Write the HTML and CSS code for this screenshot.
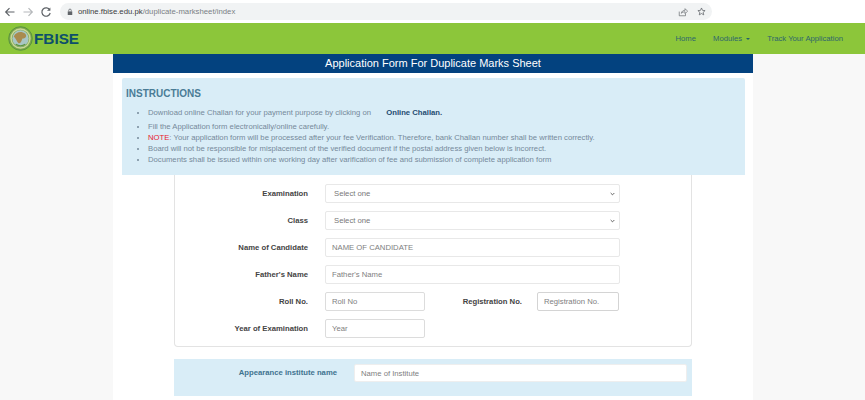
FILE: index.html
```html
<!DOCTYPE html>
<html lang="en">
<head>
    <meta charset="UTF-8">
    <title>Application Form For Duplicate Marks Sheet</title>
    <link rel="stylesheet" href="styles.css">
</head>
<body>

<div class="browser-bar">
    <svg class="nav-icon" viewBox="0 0 12 12"><path d="M10.500 6H2M5.500 2.200 1.700 6l3.800 3.800" fill="none" stroke="#5f6368" stroke-width="1.200"/></svg>
    <svg class="nav-icon" viewBox="0 0 12 12"><path d="M1.500 6H10M6.500 2.200 10.300 6 6.500 9.800" fill="none" stroke="#b5b8bb" stroke-width="1.200"/></svg>
    <svg class="nav-icon" viewBox="0 0 12 12"><path d="M9.800 4A4.200 4.200 0 1 0 10.200 7" fill="none" stroke="#5f6368" stroke-width="1.200"/><path d="M10.400 1.400v3.400H7z" fill="#5f6368"/></svg>
    <div class="address-bar">
        <svg class="lock" viewBox="0 0 8 10"><path d="M1 4.200h6V9H1z" fill="#5f6368"/><path d="M2.300 4.200V2.800a1.700 1.700 0 0 1 3.400 0v1.400" fill="none" stroke="#5f6368"/></svg>
        <span class="url"><span class="domain">online.fbise.edu.pk</span>/duplicate-marksheet/index</span>
        <svg class="share" viewBox="0 0 12 12"><path d="M1.500 5.500v5h7.500V8M4 7.500c.4-2.400 2.200-3.600 4.500-3.600V2l3 3-3 3V5.800C6.600 5.800 5.100 6.300 4 7.500z" fill="none" stroke="#5f6368" stroke-width=".8"/></svg>
        <svg class="star" viewBox="0 0 12 12"><path d="M6 1.300 7.400 4.500l3.400.3-2.600 2.300.8 3.400L6 8.700 3 10.500l.8-3.400L1.200 4.800l3.400-.3z" fill="none" stroke="#5f6368"/></svg>
    </div>
</div>

<nav class="navbar">
    <div class="brand">
        <svg class="logo" viewBox="0 0 26 26">
            <circle cx="13" cy="13" r="12.300" fill="#7da84a" stroke="#4f8a3e" stroke-width=".8"/>
            <circle cx="13" cy="13" r="9.800" fill="none" stroke="#c9d79a" stroke-width="1.500"/>
            <circle cx="13" cy="13" r="8.500" fill="#a8c6c4"/>
            <path d="M6 11c2-5 8-6 12-3 2 3 0 5-3 5-1 2-1 5-4 5-2-2-3-5-5-7z" fill="#a98b4e"/>
            <path d="M8 19c3 2 7 2 10 0" fill="none" stroke="#5e9440" stroke-width="1.500"/>
        </svg>
        <span class="brand-name">FBISE</span>
    </div>
    <ul class="nav-links">
        <li>Home</li>
        <li>Modules <span class="caret"></span></li>
        <li>Track Your Application</li>
    </ul>
</nav>

<div class="page">
    <h1 class="page-title">Application Form For Duplicate Marks Sheet</h1>

    <div class="instructions">
        <h4>INSTRUCTIONS</h4>
        <ul class="first-line">
            <li>Download online Challan for your payment purpose by clicking on <a class="challan-link">Online Challan.</a></li>
        </ul>
        <ul>
            <li>Fill the Application form electronically/online carefully.</li>
            <li><span class="note">NOTE</span>: Your application form will be processed after your fee Verification. Therefore, bank Challan number shall be written correctly.</li>
            <li>Board will not be responsible for misplacement of the verified document if the postal address given below is incorrect.</li>
            <li>Documents shall be issued within one working day after varification of fee and submission of complete application form</li>
        </ul>
    </div>

    <form class="form-panel">
        <div class="form-row">
            <label for="examination">Examination</label>
            <select id="examination" class="field wide pick"><option>Select one</option></select>
        </div>
        <div class="form-row">
            <label for="studentClass">Class</label>
            <select id="studentClass" class="field wide pick"><option>Select one</option></select>
        </div>
        <div class="form-row">
            <label for="candidate">Name of Candidate</label>
            <input id="candidate" class="field wide" type="text" placeholder="NAME OF CANDIDATE">
        </div>
        <div class="form-row">
            <label for="father">Father's Name</label>
            <input id="father" class="field wide" type="text" placeholder="Father's Name">
        </div>
        <div class="form-row">
            <label for="rollNo">Roll No.</label>
            <input id="rollNo" class="field short" type="text" placeholder="Roll No">
            <label for="regNo" class="reg-label">Registration No.</label>
            <input id="regNo" class="field reg" type="text" placeholder="Registration No.">
        </div>
        <div class="form-row">
            <label for="year">Year of Examination</label>
            <input id="year" class="field short" type="text" placeholder="Year">
        </div>
    </form>

    <div class="institute-panel">
        <label for="institute">Appearance institute name</label>
        <input id="institute" class="field institute" type="text" placeholder="Name of Institute">
    </div>
</div>

</body>
</html>
```

FILE: styles.css
```css
body {
    margin: 0;
    height: 400px;
    overflow: hidden;
    background-color: #f8f8f8;
    font-family: "Liberation Sans", Arial, sans-serif;
    font-size: 7.7px;
    color: #555;
}

/* Browser chrome */
.browser-bar {
    display: flex;
    align-items: center;
    height: 23px;
    padding-left: 4px;
    background-color: #fff;
}

.nav-icon {
    width: 12px;
    height: 12px;
    margin-right: 6px;
    flex-shrink: 0;
}

.address-bar {
    display: flex;
    align-items: center;
    width: 645px;
    height: 17px;
    margin-left: 2px;
    padding-left: 7px;
    background-color: #f1f3f4;
    border-radius: 9px;
}

.lock {
    width: 6px;
    height: 8px;
    margin-right: 5px;
}

.url {
    flex: 1;
    font-size: 7.75px;
    color: #7a7f84;
}

.domain {
    color: #3a3c40;
}

.share {
    width: 10px;
    height: 10px;
    margin-right: 9px;
}

.star {
    width: 9px;
    height: 9px;
    margin-right: 6px;
}

/* Green nav */
.navbar {
    display: flex;
    justify-content: space-between;
    align-items: center;
    height: 31px;
    background-color: #8cc63a;
}

.brand {
    display: flex;
    align-items: center;
    padding-left: 8px;
}

.logo {
    width: 25px;
    height: 25px;
}

.brand-name {
    margin-left: 1px;
    font-size: 15.300px;
    font-weight: bold;
    color: #0d4f6b;
}

.nav-links {
    display: flex;
    gap: 17px;
    margin: 0;
    padding: 0 22px 0 0;
    list-style: none;
    color: #2f666c;
}

.caret {
    display: inline-block;
    margin-left: 2px;
    vertical-align: middle;
    border-top: 2.500px solid #24606a;
    border-left: 2.500px solid transparent;
    border-right: 2.500px solid transparent;
}

/* Page */
.page {
    width: 640px;
    margin-left: 113px;
    height: 346px;
    background-color: #fff;
}

.page-title {
    margin: 0;
    height: 19px;
    line-height: 19px;
    text-align: center;
    font-size: 11px;
    font-weight: normal;
    color: #fff;
    background-color: #03427f;
}

.instructions {
    width: 623px;
    height: 97px;
    margin: 5px 0 0 9px;
    padding: 10px 0 0 4px;
    box-sizing: border-box;
    background-color: #d9edf7;
    color: #75899a;
    border-radius: 2px 2px 0 0;
}

.instructions h4 {
    margin: 0;
    font-size: 10px;
    line-height: 12px;
    font-weight: bold;
    color: #4a7c96;
}

.instructions ul {
    margin: 0;
    padding: 0 0 0 22px;
    line-height: 11px;
}

.instructions .first-line {
    margin-top: 6px;
    margin-bottom: 2px;
    line-height: 13px;
}

.challan-link {
    margin-left: 13px;
    font-weight: bold;
    color: #1f4c72;
}

.note {
    color: #e8212e;
}

.form-panel {
    width: 518px;
    height: 172px;
    margin-left: 61px;
    padding-top: 9px;
    box-sizing: border-box;
    background-color: #fff;
    border: 1px solid #e3e3e3;
    border-top: none;
    border-radius: 0 0 4px 4px;
}

.form-row {
    display: flex;
    align-items: center;
    height: 19px;
    margin-bottom: 8px;
}

.form-row label {
    width: 133px;
    margin-right: 17px;
    text-align: right;
    font-weight: bold;
    color: #444;
}

.form-row .reg-label {
    width: 97px;
    margin-right: 15px;
}

.field {
    box-sizing: border-box;
    height: 19px;
    padding: 0 6px;
    font-family: "Liberation Sans", Arial, sans-serif;
    font-size: 7.7px;
    color: #777;
    background-color: #fff;
    border: 1px solid #e8e8e8;
    border-radius: 2px;
}

.field::placeholder {
    color: #808080;
}

.pick {
    appearance: none;
    padding-left: 8px;
    background-image: url("data:image/svg+xml,%3Csvg xmlns='http://www.w3.org/2000/svg' viewBox='0 0 6 4'%3E%3Cpath d='M.8.8 3 3 5.200.8' fill='none' stroke='%23444' stroke-width='1'/%3E%3C/svg%3E");
    background-repeat: no-repeat;
    background-position: right 4px center;
    background-size: 5px 4px;
}

.wide {
    width: 295px;
}

.short {
    width: 100px;
    border-color: #dcdcdc;
}

.reg {
    width: 82px;
    border-color: #d4d4d4;
}

.institute-panel {
    display: flex;
    align-items: flex-start;
    width: 518px;
    height: 37px;
    margin: 12px 0 0 61px;
    padding-top: 5px;
    box-sizing: border-box;
    background-color: #d9edf7;
}

.institute-panel label {
    width: 163px;
    margin-right: 17px;
    line-height: 18px;
    text-align: right;
    font-weight: bold;
    color: #3f7390;
}

.institute {
    width: 333px;
    height: 18px;
    border-color: #eee;
}
```
